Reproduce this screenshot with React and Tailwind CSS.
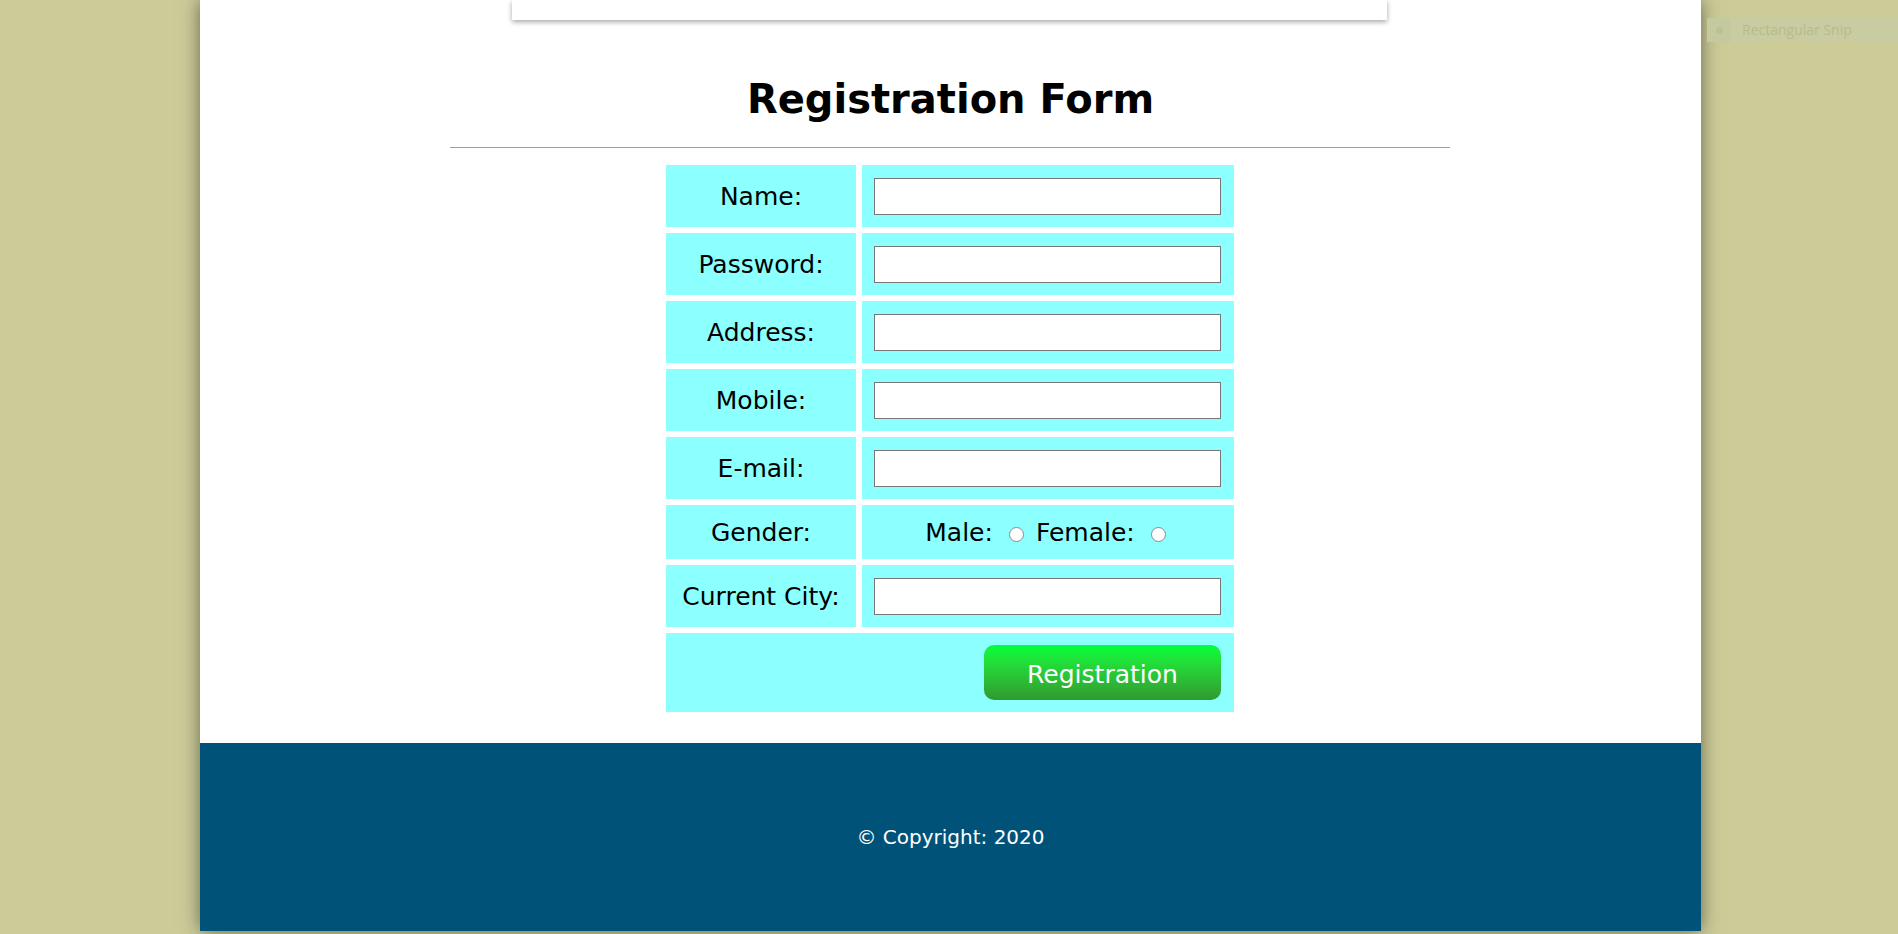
import React from "react";

const fields = [
  { label: "Name:", type: "text" },
  { label: "Password:", type: "password" },
  { label: "Address:", type: "text" },
  { label: "Mobile:", type: "text" },
  { label: "E-mail:", type: "text" },
];

function LabelCell({ children, h }) {
  return (
    <div className={`${h} bg-[#8cffff] flex items-center justify-center pt-[2px] text-[25px] text-black`}>
      {children}
    </div>
  );
}

function InputCell({ type = "text", h }) {
  return (
    <div className={`${h} bg-[#8cffff] flex items-center pl-[12px]`}>
      <input
        type={type}
        className="w-[347px] h-[37px] bg-white border border-[#767676] outline-none px-1 text-[18px]"
      />
    </div>
  );
}

export default function App() {
  return (
    <div className="relative h-[934px] w-[1898px] overflow-hidden bg-[#cccc99] font-['DejaVu_Sans','Verdana',sans-serif] text-black">
      <div className="ml-[200px] w-[1501px] h-[931px] bg-white shadow-[0_0_18px_rgba(0,0,0,0.5)] flex flex-col">
        <div className="ml-[312px] w-[875px] h-[20px] shrink-0 bg-white shadow-[0_2px_5px_rgba(0,0,0,0.35)]" />
        <h1 className="mt-[56px] text-center text-[40px] leading-[46px] font-bold">
          Registration Form
        </h1>
        <div className="mt-[25px] ml-[250px] w-[1000px] h-px shrink-0 bg-[#a0a0a0]" />
        <div className="mt-[17px] ml-[466px] w-[568px] grid grid-cols-[190px_372px] gap-[6px]">
          {fields.map((f) => (
            <React.Fragment key={f.label}>
              <LabelCell h="h-[62px]">{f.label}</LabelCell>
              <InputCell type={f.type} h="h-[62px]" />
            </React.Fragment>
          ))}
          <LabelCell h="h-[54px]">Gender:</LabelCell>
          <div className="h-[54px] bg-[#8cffff] flex items-center justify-center pt-[2px] pr-[5px] text-[25px]">
            <span>Male:</span>
            <input
              type="radio"
              name="gender"
              className="appearance-none ml-[16px] mt-[2px] w-[15px] h-[15px] rounded-full border border-[#8a8a8a] bg-white"
            />
            <span className="ml-[12px]">Female:</span>
            <input
              type="radio"
              name="gender"
              className="appearance-none ml-[16px] mt-[2px] w-[15px] h-[15px] rounded-full border border-[#8a8a8a] bg-white"
            />
          </div>
          <LabelCell h="h-[62px]">Current City:</LabelCell>
          <InputCell h="h-[62px]" />
          <div className="col-span-2 h-[79px] bg-[#8cffff] flex items-center justify-end pr-[13px]">
            <button
              type="button"
              className="w-[237px] h-[55px] pt-[3px] rounded-[10px] bg-gradient-to-b from-[#00ff3c] to-[#2f9a30] text-white text-[25px] leading-none"
            >
              Registration
            </button>
          </div>
        </div>
        <footer className="mt-[31px] h-[188px] shrink-0 bg-[#005278] flex items-center justify-center text-white text-[20px]">
          © Copyright: 2020
        </footer>
      </div>

      <div className="absolute left-[1707px] top-[18px] w-[191px] h-[24px] bg-[#c9cca0] flex items-center">
        <div className="w-[24px] h-full bg-[#c5c99e] flex items-center justify-center">
          <div className="w-[7px] h-[7px] rounded-full bg-[#bcc193]" />
        </div>
        <span className="ml-[11px] text-[14px] leading-none text-[#b8ba8c] font-['Open_Sans',sans-serif]">
          Rectangular Snip
        </span>
      </div>
    </div>
  );
}
